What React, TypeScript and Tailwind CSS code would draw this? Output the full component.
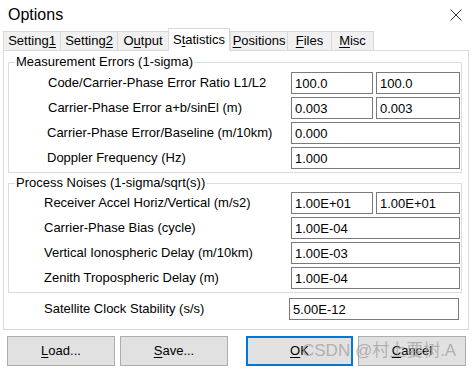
import React from 'react';

// Mnemonic letter underlined, the way Win32 dialogs show it
function Mn({ pre = '', u, post = '' }: { pre?: string; u: string; post?: string }) {
  return (
    <span>
      {pre}
      <span className="underline underline-offset-2">{u}</span>
      {post}
    </span>
  );
}

function Tab({ children, active = false, w }: { children: React.ReactNode; active?: boolean; w: string }) {
  if (active) {
    return (
      <div className={`${w} h-[23px] -mb-px z-10 bg-white border border-[#d9d9d9] border-b-0 flex items-center justify-center`}>
        {children}
      </div>
    );
  }
  return (
    <div className={`${w} h-[19px] bg-[#f0f0f0] border border-[#d9d9d9] border-b-0 -mr-px flex items-center justify-center`}>
      {children}
    </div>
  );
}

function Field({ value, w }: { value: string; w: string }) {
  return (
    <div className={`${w} h-[22px] border border-[#7a7a7a] bg-white pl-[3px] flex items-center leading-none`}>
      {value}
    </div>
  );
}

function Row({ label, values, pl }: { label: string; values: string[]; pl: string }) {
  return (
    <div className="flex h-[22px] items-center">
      <div className={`w-[282px] ${pl} whitespace-nowrap`}>{label}</div>
      {values.length === 2 ? (
        <div className="flex gap-[3px]">
          <Field value={values[0]} w="w-[82px]" />
          <Field value={values[1]} w="w-[84px]" />
        </div>
      ) : (
        <Field value={values[0]} w="w-[169px]" />
      )}
    </div>
  );
}

function Group({ title, children, className }: { title: string; children: React.ReactNode; className: string }) {
  return (
    <div className={`relative ml-[4px] w-[454px] border border-[#dcdcdc] ${className}`}>
      <span className="absolute -top-[9px] left-[6px] bg-white px-px leading-[16px]">{title}</span>
      {children}
    </div>
  );
}

function Btn({ children, w, def = false }: { children: React.ReactNode; w: string; def?: boolean }) {
  return (
    <div
      className={`${w} h-[30px] bg-[#e1e1e1] flex items-center justify-center ${
        def ? 'border-2 border-[#0078d7]' : 'border border-[#adadad]'
      }`}
    >
      {children}
    </div>
  );
}

export default function App() {
  return (
    <div className="relative w-[474px] h-[372px] overflow-hidden bg-white text-black text-[13px] font-['Liberation_Sans',Arial,sans-serif]">
      {/* barre de titre */}
      <div className="h-[28px] flex items-center justify-between pl-[8px] pr-[12px]">
        <span className="text-[16px] pt-[2px]">Options</span>
        <svg width="12" height="12" viewBox="0 0 12 12" className="mt-[2px]">
          <path d="M0.5 0.5L11.5 11.5M11.5 0.5L0.5 11.5" stroke="#333" strokeWidth="1" />
        </svg>
      </div>

      {/* onglets */}
      <div className="h-[22px] flex items-end pl-[3px]">
        <Tab w="w-[58px]"><Mn pre="Setting" u="1" /></Tab>
        <Tab w="w-[58px]"><Mn pre="Setting" u="2" /></Tab>
        <Tab w="w-[52px]"><Mn pre="O" u="u" post="tput" /></Tab>
        <Tab w="w-[62px]" active><Mn pre="S" u="t" post="atistics" /></Tab>
        <Tab w="w-[58px]"><Mn u="P" post="ositions" /></Tab>
        <Tab w="w-[45px]"><Mn u="F" post="iles" /></Tab>
        <Tab w="w-[43px]"><Mn u="M" post="isc" /></Tab>
      </div>

      {/* panneau de l'onglet */}
      <div className="ml-[3px] w-[466px] h-[280px] border border-[#d9d9d9] bg-white">
        <Group title="Measurement Errors (1-sigma)" className="mt-[11px] h-[111px] pt-[9px]">
          <div className="flex flex-col gap-[3px]">
            <Row pl="pl-[39px]" label="Code/Carrier-Phase Error Ratio L1/L2" values={['100.0', '100.0']} />
            <Row pl="pl-[39px]" label="Carrier-Phase Error a+b/sinEl (m)" values={['0.003', '0.003']} />
            <Row pl="pl-[38px]" label="Carrier-Phase Error/Baseline (m/10km)" values={['0.000']} />
            <Row pl="pl-[38px]" label="Doppler Frequency (Hz)" values={['1.000']} />
          </div>
        </Group>

        <Group title="Process Noises (1-sigma/sqrt(s))" className="mt-[10px] h-[110px] pt-[8px]">
          <div className="flex flex-col gap-[3px]">
            <Row pl="pl-[35px]" label="Receiver Accel Horiz/Vertical (m/s2)" values={['1.00E+01', '1.00E+01']} />
            <Row pl="pl-[35px]" label="Carrier-Phase Bias (cycle)" values={['1.00E-04']} />
            <Row pl="pl-[35px]" label="Vertical Ionospheric Delay (m/10km)" values={['1.00E-03']} />
            <Row pl="pl-[35px]" label="Zenith Tropospheric Delay (m)" values={['1.00E-04']} />
          </div>
        </Group>

        <div className="mt-[5px] flex h-[22px] items-center">
          <div className="w-[285px] pl-[40px] whitespace-nowrap">Satellite Clock Stability (s/s)</div>
          <Field value="5.00E-12" w="w-[170px]" />
        </div>
      </div>

      {/* boutons */}
      <div className="mt-[6px] flex pl-[7px]">
        <div className="flex gap-[5px]">
          <Btn w="w-[108px]"><Mn u="L" post="oad..." /></Btn>
          <Btn w="w-[108px]"><Mn u="S" post="ave..." /></Btn>
        </div>
        <div className="ml-[18px] flex gap-[5px]">
          <Btn w="w-[107px]" def><Mn u="O" post="K" /></Btn>
          <Btn w="w-[108px]"><Mn u="C" post="ancel" /></Btn>
        </div>
      </div>

      {/* filigrane */}
      <div className="absolute left-[302px] top-[342px] whitespace-nowrap text-[17px] leading-none text-[#9a9a9a]/70 font-['Liberation_Sans','Noto_Sans_CJK_SC',sans-serif] pointer-events-none">
        CSDN @村上要树.A
      </div>
    </div>
  );
}
